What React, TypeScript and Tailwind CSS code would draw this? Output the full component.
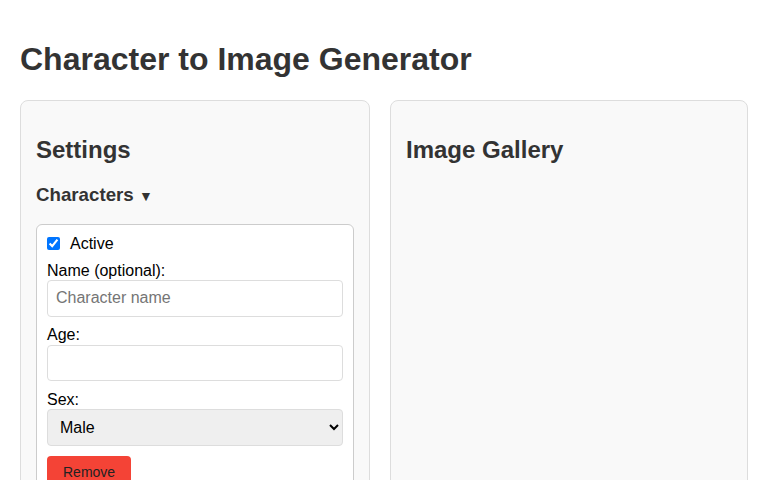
import React from "react";

export default function App() {
  return (
    <div className="bg-white p-[20px] min-h-screen text-black" style={{ fontFamily: '"Liberation Sans", Arial, sans-serif' }}>
      <h1 className="text-[32px] font-bold text-[#333] leading-[37px] my-[21.44px]">Character to Image Generator</h1>
      <div className="flex gap-[20px] items-stretch">
        <div className="w-[350px] shrink-0 bg-[#f9f9f9] border border-[#ddd] rounded-[8px] p-[15px]">
          <h2 className="text-[24px] font-bold text-[#333] leading-[27.6px] mt-[19.92px] mb-[19.92px]">Settings</h2>
          <h3 className="text-[18.72px] font-bold text-[#333] leading-[21.5px] h-[21.5px] mt-[20.5px] mb-[18.72px] cursor-pointer">
            Characters <span className="text-[14px] leading-none">▼</span>
          </h3>
          <div className="bg-white border border-[#ccc] rounded-[6px] p-[10px]">
            <label className="flex items-center h-[17.3px] mb-[9.5px] text-[16px]">
              <input type="checkbox" defaultChecked className="w-[13px] h-[13px] m-0" />
              <span className="ml-[10px]">Active</span>
            </label>
            <div className="mb-[9.5px]">
              <label className="block text-[16px] leading-[18.4px]">Name (optional):</label>
              <input
                type="text"
                placeholder="Character name"
                className="block w-full border border-[#ddd] rounded-[4px] p-[8px] text-[16px] leading-[18.4px] bg-white placeholder:text-[#757575]"
              />
            </div>
            <div className="mb-[10px]">
              <label className="block text-[16px] leading-[18.4px]">Age:</label>
              <input
                type="number"
                className="block w-full border border-[#ddd] rounded-[4px] p-[8px] text-[16px] leading-[18.4px] bg-white"
              />
            </div>
            <div className="mb-[10px]">
              <label className="block text-[16px] leading-[18.4px]">Sex:</label>
              <select className="block w-full border border-[#ddd] rounded-[4px] p-[8px] text-[16px] leading-[18.4px] bg-[#efefef] h-[36.5px]">
                <option>Male</option>
                <option>Female</option>
              </select>
            </div>
            <button className="bg-[#f44336] text-[#222] text-[14px] leading-[16px] px-[16px] py-[8px] rounded-[4px]">Remove</button>
          </div>
        </div>
        <div className="flex-1 bg-[#f9f9f9] border border-[#ddd] rounded-[8px] p-[15px]">
          <h2 className="text-[24px] font-bold text-[#333] leading-[27.6px] mt-[19.92px] mb-[19.92px]">Image Gallery</h2>
        </div>
      </div>
    </div>
  );
}
